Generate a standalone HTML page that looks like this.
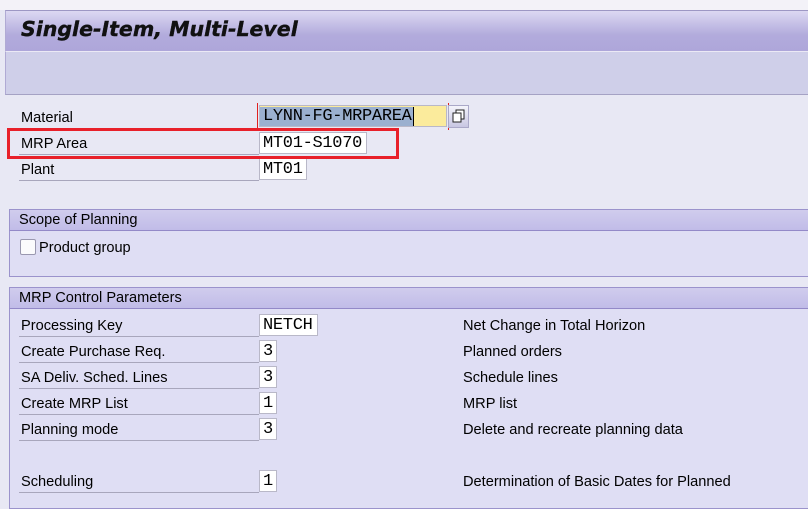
<!DOCTYPE html>
<html><head><style>
*{margin:0;padding:0;box-sizing:border-box}
body{width:808px;height:506px;overflow:hidden;background:#e8e8f4;font-family:"Liberation Sans",Tahoma,sans-serif;font-size:14.6px;color:#000;position:relative}
.a{position:absolute}
.lbl{position:absolute;left:19px;padding-left:2px;height:23px;line-height:25px;width:240px;border-bottom:1px solid #a8a6bc}
.inp{position:absolute;left:259px;height:22px;background:#fff;border:1px solid #b9b8c8;font-family:"Liberation Mono",monospace;font-size:17px;line-height:21px;padding-left:3px;letter-spacing:-0.3px}
.rt{position:absolute;left:463px;line-height:25px}
.gh{position:absolute;left:9px;right:0;height:22px;background:linear-gradient(#d0cced,#c1bce8);border-top:1px solid #9b93cc;border-bottom:1px solid #9389c8;border-left:1px solid #9b93cc;padding-left:9px;line-height:21px}
.gb{position:absolute;left:9px;right:0;background:#dfdef4;border-left:1px solid #9b93cc;border-bottom:1px solid #9b93cc}
</style></head><body>
<div class="a" style="left:0;top:0;width:808px;height:10px;background:#f3f2f8"></div>
<div class="a" style="left:5px;top:10px;width:803px;height:41px;background:linear-gradient(#dcd8f2,#b2abdc 60%,#aea6da);border-top:1px solid #9d97c4;border-left:1px solid #b0aad4"></div>
<div class="a" style="left:21px;top:17px;font-family:'DejaVu Sans',sans-serif;font-size:20.5px;font-weight:bold;font-style:italic;color:#111;-webkit-text-stroke:0.4px #111">Single-Item, Multi-Level</div>
<div class="a" style="left:5px;top:51px;width:803px;height:44px;background:#cfcfe9;border-top:1px solid #ebe9f5;border-bottom:1px solid #a5a2c4;border-left:1px solid #b0aad4"></div>

<div class="lbl" style="top:106px">Material</div>
<div class="inp" style="top:105px;width:188px;background:#fbeb9c;padding:0"><span style="background:#9bb0cf;padding:0 1px 0 3px;display:inline-block;line-height:19px;margin-top:1px;border-right:1px solid #000">LYNN-FG-MRPAREA</span></div>
<div class="a" style="left:257px;top:103px;width:192px;height:27px;border-left:1px solid #e02020;border-right:1px solid #e02020"></div>
<div class="a" style="left:448px;top:105px;width:21px;height:23px;background:linear-gradient(#f4f4fb,#c8c6e2);border:1px solid #aaa8c8"><svg width="19" height="21"><rect x="7" y="4" width="8" height="9" fill="#fff" stroke="#222"/><rect x="4" y="7" width="8" height="9" fill="#fff" stroke="#222"/></svg></div>

<div class="lbl" style="top:132px">MRP Area</div>
<div class="inp" style="top:132px;width:108px">MT01-S1070</div>
<div class="lbl" style="top:158px">Plant</div>
<div class="inp" style="top:158px;width:48px">MT01</div>
<div class="a" style="left:7px;top:128px;width:392px;height:31px;border:3px solid #e8202a"></div>

<div class="gh" style="top:209px">Scope of Planning</div>
<div class="gb" style="top:231px;height:46px"></div>
<div class="a" style="left:20px;top:239px;width:16px;height:16px;background:#fbfbfd;border:1px solid #9a98b0;border-radius:2px"></div>
<div class="a" style="left:39px;top:238px;line-height:20px">Product group</div>

<div class="gh" style="top:287px">MRP Control Parameters</div>
<div class="gb" style="top:309px;height:200px"></div>

<div class="lbl" style="top:314px">Processing Key</div>
<div class="inp" style="top:314px;width:59px">NETCH</div>
<div class="rt" style="top:314px">Net Change in Total Horizon</div>

<div class="lbl" style="top:340px">Create Purchase Req.</div>
<div class="inp" style="top:340px;width:18px">3</div>
<div class="rt" style="top:340px">Planned orders</div>

<div class="lbl" style="top:366px">SA Deliv. Sched. Lines</div>
<div class="inp" style="top:366px;width:18px">3</div>
<div class="rt" style="top:366px">Schedule lines</div>

<div class="lbl" style="top:392px">Create MRP List</div>
<div class="inp" style="top:392px;width:18px">1</div>
<div class="rt" style="top:392px">MRP list</div>

<div class="lbl" style="top:418px">Planning mode</div>
<div class="inp" style="top:418px;width:18px">3</div>
<div class="rt" style="top:418px">Delete and recreate planning data</div>

<div class="lbl" style="top:470px">Scheduling</div>
<div class="inp" style="top:470px;width:18px">1</div>
<div class="rt" style="top:470px">Determination of Basic Dates for Planned</div>
</body></html>
